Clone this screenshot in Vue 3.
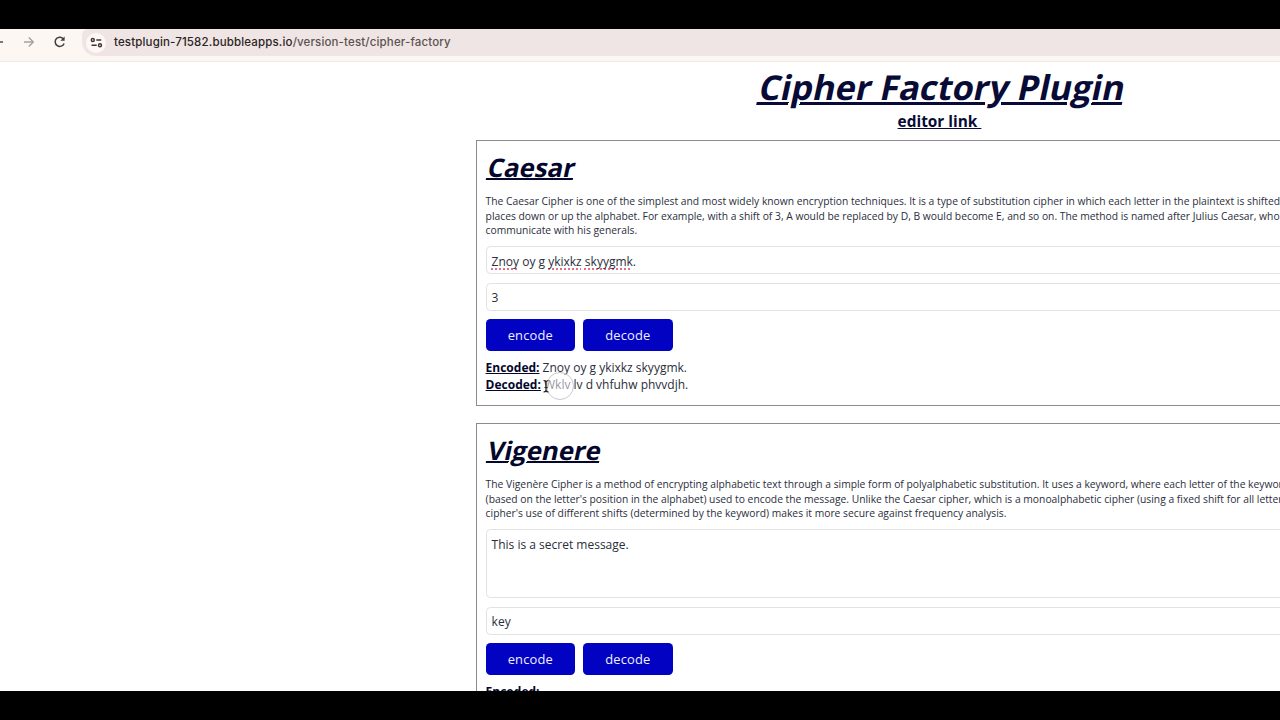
<script setup>
const sections = [
  {
    id: 'caesar',
    title: 'Caesar',
    lines: [
      'The Caesar Cipher is one of the simplest and most widely known encryption techniques. It is a type of substitution cipher in which each letter in the plaintext is shifted',
      'places down or up the alphabet. For example, with a shift of 3, A would be replaced by D, B would become E, and so on. The method is named after Julius Caesar, who',
      'communicate with his generals.'
    ],
    message: [
      { text: 'Znoy', flagged: true },
      { text: ' oy g ' },
      { text: 'ykixkz', flagged: true },
      { text: ' ' },
      { text: 'skyygmk', flagged: true },
      { text: '.' }
    ],
    tall: false,
    param: '3',
    encoded: 'Znoy oy g ykixkz skyygmk.',
    decoded: 'Wklv lv d vhfuhw phvvdjh.',
    pointer: true
  },
  {
    id: 'vigenere',
    title: 'Vigenere',
    lines: [
      'The Vigenère Cipher is a method of encrypting alphabetic text through a simple form of polyalphabetic substitution. It uses a keyword, where each letter of the keyword',
      "(based on the letter's position in the alphabet) used to encode the message. Unlike the Caesar cipher, which is a monoalphabetic cipher (using a fixed shift for all letters",
      "cipher's use of different shifts (determined by the keyword) makes it more secure against frequency analysis."
    ],
    message: [{ text: 'This is a secret message.' }],
    tall: true,
    param: 'key',
    encoded: '',
    decoded: '',
    pointer: false
  }
]
</script>

<template>
  <div class="frame">
    <header class="toolbar">
      <svg class="nav" width="80" height="26" viewBox="0 0 80 26" fill="none">
        <path d="M-6 13H3" stroke="#554a49" stroke-width="1.5" />
        <path d="M24 13H33M28.8 8.5L33.3 13L28.8 17.5" stroke="#aaa19f" stroke-width="1.4" />
        <path d="M63.6 10.2A4.6 4.6 0 1 0 64.1 14.4" stroke="#443b3a" stroke-width="1.5" />
        <path d="M64.6 7.6V11.7H60.4Z" fill="#443b3a" />
      </svg>
      <div class="omnibox">
        <span class="site">
          <svg width="20" height="20" viewBox="0 0 20 20" fill="none" stroke="#3c3433" stroke-width="1.4">
            <circle cx="6.8" cy="7" r="1.5" />
            <path d="M10.300 7H15.200M5.500 12.300H10.700" />
            <circle cx="14" cy="12.300" r="1.5" />
          </svg>
        </span>
        <span class="url">testplugin-71582.bubbleapps.io<span class="path">/version-test/cipher-factory</span></span>
      </div>
    </header>

    <main class="page">
      <h1><span class="slant">Cipher Factory Plugin</span></h1>
      <a class="editor">editor link&nbsp;</a>
      <section v-for="s in sections" :key="s.id" class="card">
        <h2><span class="slant">{{ s.title }}</span></h2>
        <p class="about"><span v-for="l in s.lines" :key="l">{{ l }}</span></p>
        <div class="field message" :class="{ tall: s.tall }"><span v-for="(m, i) in s.message" :key="i" :class="{ flagged: m.flagged }">{{ m.text }}</span></div>
        <div class="field">{{ s.param }}</div>
        <div class="actions">
          <button>encode</button>
          <button>decode</button>
        </div>
        <div class="results">
          <div><b>Encoded:</b> {{ s.encoded }}</div>
          <div class="decoded">
            <b>Decoded:</b> {{ s.decoded }}
            <svg v-if="s.pointer" class="pointer" width="36" height="32" viewBox="0 0 36 32" fill="none">
              <circle cx="19" cy="16" r="13.5" fill="#fff" fill-opacity=".5" stroke="#c9c9ce" />
              <path d="M2.500 10.500Q4.500 10.500 5 12Q5.500 10.500 7.500 10.500M5 12V20.500M2.500 22Q4.500 22 5 20.500Q5.500 22 7.500 22M3.500 17.500H6.500" stroke="#222" stroke-width="1.200" />
            </svg>
          </div>
        </div>
      </section>
    </main>
  </div>
</template>

<style>
body { background: #000; overflow: hidden; }
</style>

<style scoped>
.frame {
  box-sizing: border-box;
  width: 1280px;
  height: 691px;
  padding-top: 29px;
  overflow: hidden;
  background: #000;
  font-family: "Open Sans", sans-serif;
  color: #2a2e3c;
}
.toolbar {
  display: flex;
  box-sizing: border-box;
  height: 33px;
  background: #fdf7f4;
  border-bottom: 1px solid #efe9e5;
}
.nav { flex: none; }
.omnibox {
  display: flex;
  align-items: center;
  width: 1198px;
  height: 27px;
  margin-left: 2px;
  background: #efe5e4;
  border-radius: 6px 0 0 14px;
  flex: none;
}
.site {
  display: flex;
  width: 20px;
  height: 20px;
  margin-left: 4px;
  background: #fdf8f6;
  border-radius: 50%;
}
.url {
  margin: -1px 0 0 8px;
  font: 500 11.500px/20px Inter, sans-serif;
  letter-spacing: .15px;
  color: #2b2423;
  white-space: nowrap;
}
.path { color: #5c5250; }
.page {
  display: flex;
  flex-direction: column;
  width: 927px;
  height: 629px;
  padding: 0 0 0 476px;
  background: #fff;
}
h1 {
  margin: 0;
  font-size: 34.300px;
  line-height: 49px;
  height: 48px;
  font-weight: 700;
  text-align: center;
  color: #080b35;
}
.slant {
  display: inline-block;
  text-decoration: underline;
  text-decoration-thickness: .075em;
  transform: skewX(-12deg);
  transform-origin: 0 80%;
}
.editor {
  height: 22px;
  margin-bottom: 8px;
  font-size: 15.400px;
  line-height: 24px;
  font-weight: 700;
  text-align: center;
  text-decoration: underline;
  color: #080b35;
}
.card {
  flex: none;
  box-sizing: border-box;
  margin-bottom: 17.500px;
  padding: 8px 9px 11px 8.600px;
  border: 1px solid #8c8c90;
}
h2 {
  margin: 0 0 8px;
  height: 37px;
  font-size: 25.700px;
  line-height: 37px;
  font-weight: 700;
  color: #04062c;
}
.about {
  margin: 0 0 8.500px;
  font-size: 10.300px;
  line-height: 14.500px;
  white-space: nowrap;
}
.about span { display: block; }
.field {
  box-sizing: border-box;
  height: 28px;
  margin-bottom: 8.500px;
  padding: 0 5px;
  border: 1px solid #e2e2e4;
  border-radius: 4.500px;
  font-size: 12px;
  line-height: 28px;
  white-space: pre;
}
.message { line-height: 29px; }
.tall { height: 69px; }
.flagged {
  text-decoration: underline dotted #e0708a 1.500px;
  text-decoration-skip-ink: none;
  text-underline-offset: 2px;
}
.actions { display: flex; gap: 8px; }
button {
  width: 89.500px;
  height: 32px;
  padding: 0;
  border: 0;
  border-radius: 4.500px;
  background: #0202c2;
  color: #f0f0ff;
  font: 500 12.900px/32px "Open Sans", sans-serif;
  letter-spacing: .2px;
}
.results {
  margin-top: 8px;
  margin-bottom: .5px;
  font-size: 12px;
  line-height: 17px;
  white-space: nowrap;
}
.results b { color: #04062c; text-decoration: underline; }
.decoded { position: relative; }
.pointer { position: absolute; left: 55px; top: -6px; }
</style>
